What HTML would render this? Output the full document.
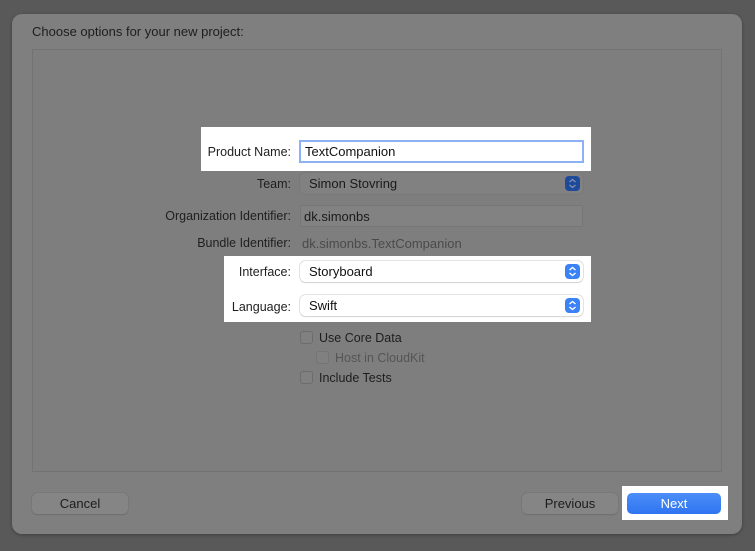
<!DOCTYPE html>
<html><head><style>
*{box-sizing:border-box;margin:0;padding:0}
body{width:755px;height:551px;background:#595959;font-family:"Liberation Sans",sans-serif;position:relative;overflow:hidden;font-size:12.5px}
.a{position:absolute}
.dlg{left:12px;top:14px;width:730px;height:520px;background:#7f7f7f;border-radius:10px;box-shadow:0 1px 3px rgba(0,0,0,.3)}
.box{left:32px;top:49px;width:690px;height:423px;border:1px solid #737373;background:#7e7e7e}
.lbl{text-align:right;width:200px;color:#1f1f1f}
.w{background:#fff}
.pop{height:21px;border-radius:5px;background:#fff;box-shadow:0 0 0 .5px #c8c8c8,0 1px 1px rgba(0,0,0,.15);color:#111;font-size:13px;padding:3px 0 0 9px}
.arr{position:absolute;right:3px;top:3px;width:15px;height:15px;border-radius:4px;background:#3b82f6}
.arr svg{position:absolute;left:0;top:0}
.cb{width:13px;height:13px;border:1px solid #6c6c6c;border-radius:3px;background:#808080}
.btn{height:21px;border-radius:5px;background:#858585;box-shadow:0 0 0 .5px #707070,0 1px 1px rgba(0,0,0,.15);text-align:center;padding-top:3px;color:#1c1c1c;font-size:13px}
</style></head><body>
<div class="a dlg"></div>
<div class="a" style="left:32px;top:24px;color:#1e1e1e;font-size:13px">Choose options for your new project:</div>
<div class="a box"></div>

<div class="a w" style="left:201px;top:127px;width:390px;height:44px"></div>
<div class="a lbl" style="left:91px;top:145px">Product Name:</div>
<div class="a" style="left:299px;top:140px;width:285px;height:23px;border:2px solid #8db1f5;background:#fff;padding:2px 0 0 4px;color:#111;font-size:13px">TextCompanion</div>

<div class="a lbl" style="left:91px;top:177px">Team:</div>
<div class="a pop" style="left:300px;top:173px;width:283px;background:#818181;box-shadow:0 0 0 .5px #747474;color:#1a1a1a">Simon Stovring<div class="arr" style="background:#1e4a9c"><svg width="15" height="15"><path d="M4.5 6 7.5 3.5 10.5 6M4.5 9 7.5 11.5 10.5 9" stroke="#7f8fae" stroke-width="1.4" fill="none"/></svg></div></div>

<div class="a lbl" style="left:91px;top:209px">Organization Identifier:</div>
<div class="a" style="left:300px;top:205px;width:283px;height:22px;background:#828282;border:1px solid #777;padding:3px 0 0 3px;color:#1a1a1a;font-size:13px">dk.simonbs</div>

<div class="a lbl" style="left:91px;top:236px">Bundle Identifier:</div>
<div class="a" style="left:302px;top:236px;color:#4a4a4a;font-size:13px">dk.simonbs.TextCompanion</div>

<div class="a w" style="left:224px;top:256px;width:367px;height:66px"></div>
<div class="a lbl" style="left:91px;top:265px">Interface:</div>
<div class="a pop" style="left:300px;top:261px;width:283px">Storyboard<div class="arr"><svg width="15" height="15"><path d="M4.5 6 7.5 3.5 10.5 6M4.5 9 7.5 11.5 10.5 9" stroke="#fff" stroke-width="1.4" fill="none"/></svg></div></div>
<div class="a lbl" style="left:91px;top:300px">Language:</div>
<div class="a pop" style="left:300px;top:295px;width:283px">Swift<div class="arr"><svg width="15" height="15"><path d="M4.5 6 7.5 3.5 10.5 6M4.5 9 7.5 11.5 10.5 9" stroke="#fff" stroke-width="1.4" fill="none"/></svg></div></div>

<div class="a cb" style="left:300px;top:331px"></div>
<div class="a" style="left:319px;top:331px;color:#1e1e1e">Use Core Data</div>
<div class="a cb" style="left:316px;top:351px;border-color:#747474"></div>
<div class="a" style="left:335px;top:351px;color:#555">Host in CloudKit</div>
<div class="a cb" style="left:300px;top:371px"></div>
<div class="a" style="left:319px;top:371px;color:#1e1e1e">Include Tests</div>

<div class="a btn" style="left:32px;top:493px;width:96px">Cancel</div>
<div class="a btn" style="left:522px;top:493px;width:96px">Previous</div>
<div class="a w" style="left:622px;top:486px;width:106px;height:34px"></div>
<div class="a btn" style="left:627px;top:493px;width:94px;background:linear-gradient(#4b8ef8,#2f74f1);box-shadow:none;color:#fff">Next</div>
</body></html>
